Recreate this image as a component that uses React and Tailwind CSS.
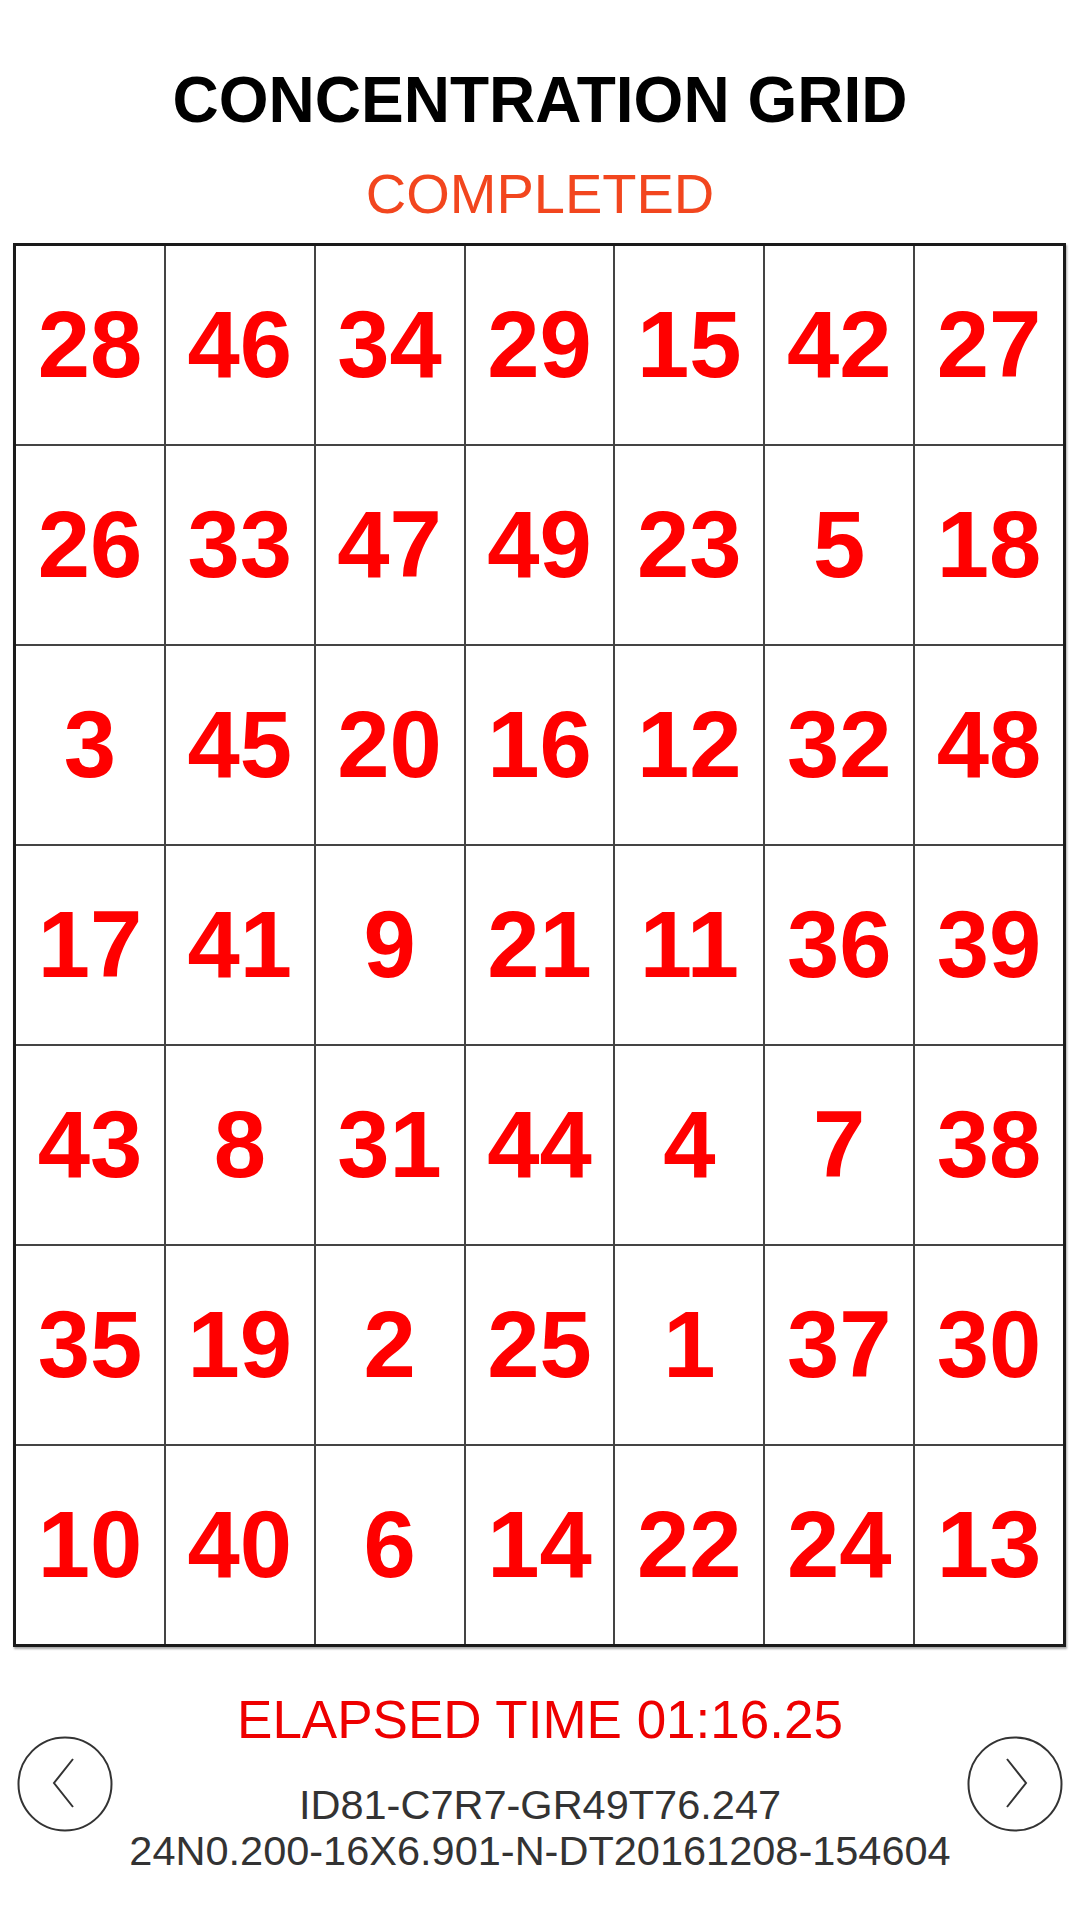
const rows = [
  [28, 46, 34, 29, 15, 42, 27],
  [26, 33, 47, 49, 23, 5, 18],
  [3, 45, 20, 16, 12, 32, 48],
  [17, 41, 9, 21, 11, 36, 39],
  [43, 8, 31, 44, 4, 7, 38],
  [35, 19, 2, 25, 1, 37, 30],
  [10, 40, 6, 14, 22, 24, 13],
];

const NavButton = ({ dir }) => (
  <svg width="96" height="96" viewBox="0 0 96 96" className="shrink-0">
    <circle cx="48" cy="48" r="46.5" fill="none" stroke="#333" strokeWidth="2" />
    {dir === 'left' ? (
      <polyline points="56,23 37,47 56,71" fill="none" stroke="#333" strokeWidth="2" />
    ) : (
      <polyline points="40,23 59,47 40,71" fill="none" stroke="#333" strokeWidth="2" />
    )}
  </svg>
);

export default function App() {
  return (
    <div
      className="w-[1080px] h-[1920px] bg-white flex flex-col items-center pt-[68px]"
      style={{ fontFamily: '"Liberation Sans", Arial, sans-serif' }}
    >
      {/* Header */}
      <h1 className="text-[64px] leading-none h-[64px] font-bold text-black">CONCENTRATION GRID</h1>
      <div className="mt-[34px] text-[56px] leading-none h-[56px] text-[#f2461e]">COMPLETED</div>

      {/* Grid */}
      <div className="mt-[21px] self-start ml-[13px] w-[1053px] border-[3px] border-[#1a1a1a] bg-[#444] shadow-[1px_2px_2px_rgba(0,0,0,0.35)]">
        <div className="grid grid-cols-7 gap-[2px]">
          {rows.flat().map((n, i) => (
            <div
              key={i}
              className="h-[198px] bg-white flex items-center justify-center text-[94px] font-bold text-[#ff0000] leading-none"
            >
              {n}
            </div>
          ))}
        </div>
      </div>

      {/* Footer */}
      <div className="w-full mt-[46px] flex items-center justify-between px-[17px]">
        <NavButton dir="left" />
        <div className="flex-1 flex flex-col items-center">
          <div className="text-[53px] leading-none h-[53px] text-[#ee0000]">ELAPSED TIME 01:16.25</div>
          <div className="mt-[36px] text-[41.5px] leading-[46px] text-[#333] text-center">
            <div>ID81-C7R7-GR49T76.247</div>
            <div>24N0.200-16X6.901-N-DT20161208-154604</div>
          </div>
        </div>
        <NavButton dir="right" />
      </div>
    </div>
  );
}
